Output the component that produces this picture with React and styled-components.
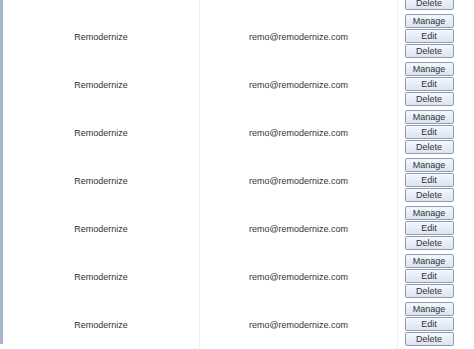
import React from "react";
import styled, { createGlobalStyle } from "styled-components";

const Global = createGlobalStyle`
  html, body { margin: 0; padding: 0; background: #fff; }
  body { font-family: "Liberation Sans", Arial, sans-serif; }
`;

const Viewport = styled.div`
  width: 474px;
  height: 349px;
  overflow: hidden;
  padding-left: 3px;
  box-sizing: border-box;
  background: linear-gradient(#a7b6cd, #a7b6cd) no-repeat 0 0 / 3px 344px;
`;

const Table = styled.div`
  margin-top: -35px;
  width: 457px;
  display: grid;
  grid-template-columns: 197px 198px 62px;
`;

const Cell = styled.div`
  height: 48px;
  box-sizing: border-box;
  display: flex;
  align-items: center;
  justify-content: center;
  font-size: 9px;
  color: #333;
  border-right: 1px solid #e9eef3;
`;

const Actions = styled.div`
  height: 48px;
  box-sizing: border-box;
  padding: 1px 0 3px;
  display: flex;
  flex-direction: column;
  align-items: center;
  gap: 1px;
`;

const Btn = styled.button`
  width: 49px;
  height: 14px;
  padding: 0;
  margin: 0;
  border: 1px solid #8e9db4;
  border-radius: 2px;
  background: linear-gradient(#f4f7fc, #dbe4f2);
  font-family: "Liberation Sans", Arial, sans-serif;
  font-size: 9px;
  line-height: 12px;
  color: #333;
`;

export default function App() {
  const rows = Array.from({ length: 8 });
  return (
    <>
      <Global />
      <Viewport>
        <Table>
          {rows.map((_, i) => (
            <React.Fragment key={i}>
              <Cell>Remodernize</Cell>
              <Cell>remo@remodernize.com</Cell>
              <Actions>
                <Btn>Manage</Btn>
                <Btn>Edit</Btn>
                <Btn>Delete</Btn>
              </Actions>
            </React.Fragment>
          ))}
        </Table>
      </Viewport>
    </>
  );
}
